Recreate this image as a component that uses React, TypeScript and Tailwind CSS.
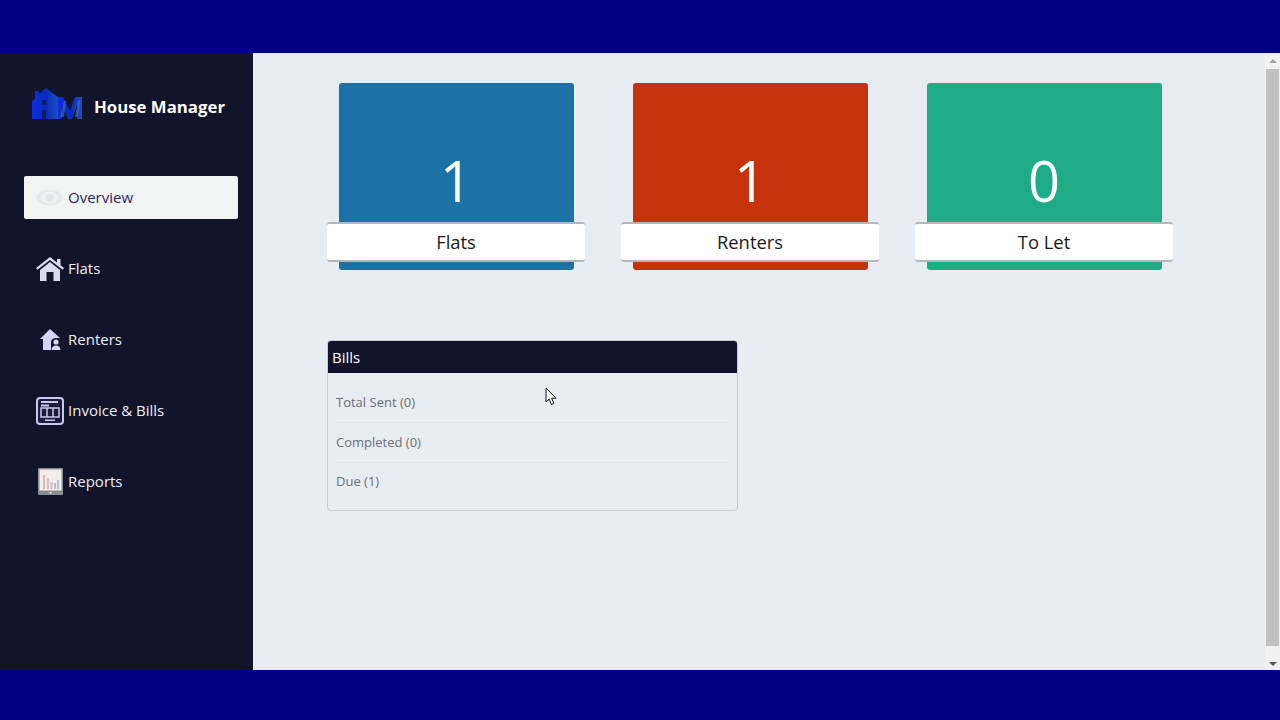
import type { ReactNode } from "react"

function Logo() {
	return (
		<svg width="52" height="33" viewBox="0 0 52 33">
			<defs>
				<linearGradient id="hm" x1="0" y1="0" x2="1" y2="0">
					<stop offset="0" stopColor="#0a2ee6" />
					<stop offset="0.55" stopColor="#0a2bb8" />
					<stop offset="1" stopColor="#1b4fc0" />
				</linearGradient>
			</defs>
			<path d="M1 32V14L4 12V4H8V7L15 1L27 10V32Z" fill="url(#hm)" />
			<rect x="11" y="13" width="4" height="5" fill="#0b1a6c" />
			<rect x="11" y="23" width="4" height="9" fill="#0b1a6c" />
			<path d="M27 10H32L39 24L44 10H51V32H46V18L41 32H37L31 18V32H27Z" fill="url(#hm)" />
			<path d="M29 30L33 14H35L33 30Z" fill="#3f74cf" opacity="0.6" />
			<path d="M44 30L47 14H49L47 30Z" fill="#3f74cf" opacity="0.6" />
		</svg>
	)
}

function EyeIcon() {
	return (
		<svg width="27" height="17" viewBox="0 0 27 17">
			<ellipse cx="13.5" cy="8.5" rx="13" ry="8" fill="#e3e8e9" />
			<ellipse cx="13.5" cy="8.5" rx="8.5" ry="6" fill="#eef1f1" />
			<circle cx="13.5" cy="8.5" r="4" fill="#e0e6e7" />
		</svg>
	)
}

function HouseIcon() {
	return (
		<svg width="28" height="24" viewBox="0 0 28 24" fill="#d9dbf5">
			<path d="M14 0L21 5.5V2H24.5V8.3L28 11L26.6 12.7L14 3L1.4 12.7L0 11Z" />
			<path d="M4 13L14 5L24 13V24H17.5V15H10.5V24H4Z" />
		</svg>
	)
}

function RenterIcon() {
	return (
		<svg width="21" height="21" viewBox="0 0 21 21" fill="#d5d5f7">
			<path d="M10 0L20 9H15.5A4.5 4.5 0 0 0 11 14.5V21H3V10H0Z" />
			<circle cx="16" cy="13" r="2.6" />
			<path d="M11.5 21C11.5 18 13.5 16.5 16 16.5S20.5 18 20.5 21Z" />
		</svg>
	)
}

function InvoiceIcon() {
	return (
		<svg width="28" height="28" viewBox="0 0 28 28" fill="none">
			<rect x="1" y="1" width="26" height="26" rx="3" stroke="#c9c9f2" strokeWidth="2" fill="#1a1d3a" />
			<rect x="5" y="4" width="17" height="2" fill="#c9c9f2" />
			<rect x="5" y="7.5" width="8" height="2" fill="#c9c9f2" />
			<rect x="5" y="11" width="18" height="9" stroke="#c9c9f2" strokeWidth="1.5" />
			<path d="M11 11V20M17 11V20" stroke="#c9c9f2" strokeWidth="1.5" />
			<rect x="9" y="22.5" width="10" height="1.5" fill="#c9c9f2" />
		</svg>
	)
}

function ReportIcon() {
	return (
		<svg width="25" height="27" viewBox="0 0 25 27">
			<rect x="0" y="0" width="25" height="27" rx="1" fill="#8b8d91" />
			<rect x="1.5" y="1.5" width="22" height="21" fill="#f1eeec" />
			<rect x="5" y="7" width="2" height="14" fill="#eab2ad" />
			<rect x="9" y="10" width="2" height="11" fill="#d9b9c9" />
			<rect x="12.5" y="14" width="2" height="7" fill="#eab2ad" />
			<rect x="16" y="15" width="2" height="6" fill="#a9c2dc" />
			<rect x="19" y="12" width="2" height="9" fill="#a9c2dc" />
			<circle cx="12.5" cy="24.8" r="1" fill="#f1f1f1" />
		</svg>
	)
}

function NavItem({ icon, label }: { icon: ReactNode; label: string }) {
	return (
		<div className="flex h-[43px] items-center">
			<div className="flex w-[32px] shrink-0 justify-center">{icon}</div>
			<span className="ml-[2px] text-[15px] text-[#eeeef6]">{label}</span>
		</div>
	)
}

function StatCard({ value, label, color }: { value: string; label: string; color: string }) {
	return (
		<div className="relative h-[187px] w-[258px]">
			<div className={`mx-[11.5px] flex h-full justify-center rounded-[3px] pt-[65px] ${color}`}>
				<span className="text-[56px] leading-[64px] text-white">{value}</span>
			</div>
			<div className="absolute inset-x-0 top-[139px] flex h-[40px] items-center justify-center rounded-[3px] border-y-2 border-y-[#b4b8bb] bg-white text-[18.4px] text-[#1a1a1a]">
				{label}
			</div>
		</div>
	)
}

function BillRow({ label, last }: { label: string; last?: boolean }) {
	return (
		<div className={`flex h-[39.3px] items-center text-[13px] text-[#6b6f76] ${last ? "" : "border-b border-[#dfe3ea]"}`}>
			{label}
		</div>
	)
}

export default function App() {
	return (
		<div className="relative flex h-[720px] w-[1280px] flex-col overflow-hidden bg-[#000080] font-['Open_Sans',sans-serif]">
			<div className="mt-[53px] flex h-[617px]">
				<aside className="flex w-[253px] shrink-0 flex-col bg-[#11142a] pl-[24px]">
					<div className="flex h-[123px] items-start pl-[7px] pt-[34px]">
						<Logo />
						<span className="ml-[11px] mt-[7px] text-[16.8px] font-bold text-white">House Manager</span>
					</div>
					<div className="flex h-[43px] w-[214px] items-center rounded-[2px] bg-[#f2f3f3] pl-[12px]">
						<EyeIcon />
						<span className="ml-[5px] text-[15px] text-[#2a2862]">Overview</span>
					</div>
					<div className="mt-[28px] flex flex-col gap-[28px] pl-[10px]">
						<NavItem icon={<HouseIcon />} label="Flats" />
						<NavItem icon={<RenterIcon />} label="Renters" />
						<NavItem icon={<InvoiceIcon />} label="Invoice & Bills" />
						<NavItem icon={<ReportIcon />} label="Reports" />
					</div>
				</aside>
				<main className="flex-1 bg-[#e8ecf3] pl-[74px] pt-[30px]">
					<div className="flex gap-[36px]">
						<StatCard value="1" label="Flats" color="bg-[#1c72a6]" />
						<StatCard value="1" label="Renters" color="bg-[#c5320c]" />
						<StatCard value="0" label="To Let" color="bg-[#20ab87]" />
					</div>
					<div className="-ml-[0.5px] mt-[70px] h-[171px] w-[411px] overflow-hidden rounded-[4px] border border-[#c6cad2]">
						<div className="flex h-[32px] items-center bg-[#11142a] pl-[4.5px] text-[15px] text-white">Bills</div>
						<div className="px-[8.5px] pt-[11px]">
							<BillRow label="Total Sent (0)" />
							<BillRow label="Completed (0)" />
							<BillRow label="Due (1)" last />
						</div>
					</div>
				</main>
				<div className="flex w-[15px] shrink-0 flex-col items-center justify-between bg-[#f1f1f1]">
					<div className="flex h-[16px] items-center">
						<div className="h-0 w-0 border-x-[4px] border-b-[4px] border-x-transparent border-b-[#a3a3a3]" />
					</div>
					<div className="mb-[8px] w-[13px] flex-1 bg-[#c1c1c1]" />
					<div className="flex h-[16px] items-center pt-[3px]">
						<div className="h-0 w-0 border-x-[4px] border-t-[4px] border-x-transparent border-t-[#505050]" />
					</div>
				</div>
			</div>
			<svg className="absolute left-[545px] top-[387px]" width="12" height="19" viewBox="0 0 12 19">
				<path d="M1 1V15L4.2 12L6.4 17.5L8.8 16.4L6.6 11.2H11Z" fill="#fff" stroke="#111" strokeWidth="1" />
			</svg>
		</div>
	)
}
